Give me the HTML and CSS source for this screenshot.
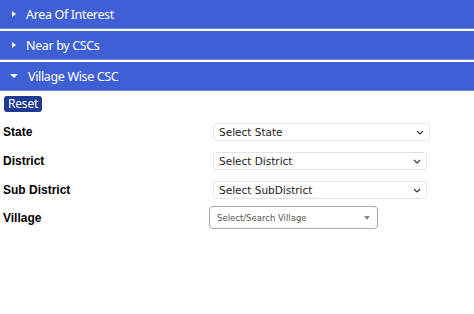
FILE: index.html
```html
<!DOCTYPE html>
<html lang="en">
<head>
  <meta charset="UTF-8">
  <meta name="viewport" content="width=device-width, initial-scale=1.0">
  <title>CSC Locator</title>
  <link rel="stylesheet" href="styles.css">
</head>
<body>
  <div class="accordion">
    <div class="acc-head">
      <span class="caret caret-right"></span>
      <span class="acc-title">Area Of Interest</span>
    </div>
    <div class="acc-head">
      <span class="caret caret-right"></span>
      <span class="acc-title">Near by CSCs</span>
    </div>
    <div class="acc-head">
      <span class="caret caret-down"></span>
      <span class="acc-title">Village Wise CSC</span>
    </div>
  </div>

  <div class="panel">
    <button class="btn-reset">Reset</button>

    <div class="form-row row-state">
      <label class="field-label">State</label>
      <div class="select-wrap w-state">
        <select class="field-select"><option>Select State</option></select>
        <svg class="chev" width="8" height="5" viewBox="0 0 8 5"><path d="M1 1l3 3 3-3" fill="none" stroke="#333" stroke-width="1.1"/></svg>
      </div>
    </div>

    <div class="form-row">
      <label class="field-label">District</label>
      <div class="select-wrap w-district">
        <select class="field-select"><option>Select District</option></select>
        <svg class="chev" width="8" height="5" viewBox="0 0 8 5"><path d="M1 1l3 3 3-3" fill="none" stroke="#333" stroke-width="1.1"/></svg>
      </div>
    </div>

    <div class="form-row">
      <label class="field-label">Sub District</label>
      <div class="select-wrap w-district">
        <select class="field-select"><option>Select SubDistrict</option></select>
        <svg class="chev" width="8" height="5" viewBox="0 0 8 5"><path d="M1 1l3 3 3-3" fill="none" stroke="#333" stroke-width="1.1"/></svg>
      </div>
    </div>

    <div class="form-row row-village">
      <label class="field-label">Village</label>
      <div class="combo">
        <span class="combo-text">Select/Search Village</span>
        <span class="combo-arrow"></span>
      </div>
    </div>
  </div>
</body>
</html>
```

FILE: styles.css
```css
body {
  margin: 0;
  font-family: 'Noto Sans', 'Open Sans', sans-serif;
  color: #000;
  background: #fff;
}

.accordion {
  display: flex;
  flex-direction: column;
  gap: 2px;
}

.acc-head {
  height: 29px;
  background-color: #3f5fd4;
  border-bottom: 1px solid #6d86de;
  box-sizing: border-box;
  display: flex;
  align-items: center;
  padding-left: 10px;
  color: #fff;
}

.acc-title {
  font-size: 12.5px;
  letter-spacing: -0.35px;
  margin-left: 10px;
}

.caret {
  width: 0;
  height: 0;
}

.caret-right {
  border-top: 3px solid transparent;
  border-bottom: 3px solid transparent;
  border-left: 4px solid #fff;
  margin-left: 2px;
}

.caret-down {
  border-left: 4px solid transparent;
  border-right: 4px solid transparent;
  border-top: 4px solid #fff;
}

.panel {
  padding: 5px 0 0 3px;
}

.btn-reset {
  display: block;
  margin-left: 1px;
  background-color: #1f3a94;
  color: #fff;
  border: none;
  border-radius: 3px;
  font-family: 'Noto Sans', 'Open Sans', sans-serif;
  font-size: 12px;
  letter-spacing: -0.2px;
  padding: 0 4px;
  height: 16px;
  line-height: 16px;
}

.form-row {
  display: flex;
  align-items: center;
  margin-top: 11px;
}

.row-state {
  margin-top: 11px;
}

.row-village {
  margin-top: 7px;
}

.field-label {
  width: 210px;
  font-family: 'Liberation Sans', Arial, sans-serif;
  font-weight: bold;
  font-size: 12px;
}

.select-wrap {
  position: relative;
  height: 18px;
}

.w-state {
  width: 217px;
}

.w-district {
  width: 214px;
}

.field-select {
  display: block;
  appearance: none;
  -webkit-appearance: none;
  width: 100%;
  height: 18px;
  border: 1px solid #e4e4e4;
  border-radius: 3px;
  background: #fff;
  font-family: 'DejaVu Sans', Verdana, sans-serif;
  font-size: 10.5px;
  color: #222;
  padding: 0 0 0 5px;
}

.chev {
  position: absolute;
  right: 6px;
  top: 7px;
}

.combo {
  width: 169px;
  height: 23px;
  margin-left: -4px;
  box-sizing: border-box;
  border: 1px solid #aaa;
  border-radius: 4px;
  display: flex;
  align-items: center;
  justify-content: space-between;
  padding: 0 7px 0 7px;
}

.combo-text {
  font-family: 'DejaVu Sans', Verdana, sans-serif;
  font-size: 8.5px;
  color: #555;
}

.combo-arrow {
  width: 0;
  height: 0;
  border-left: 3.5px solid transparent;
  border-right: 3.5px solid transparent;
  border-top: 4px solid #888;
}
```
